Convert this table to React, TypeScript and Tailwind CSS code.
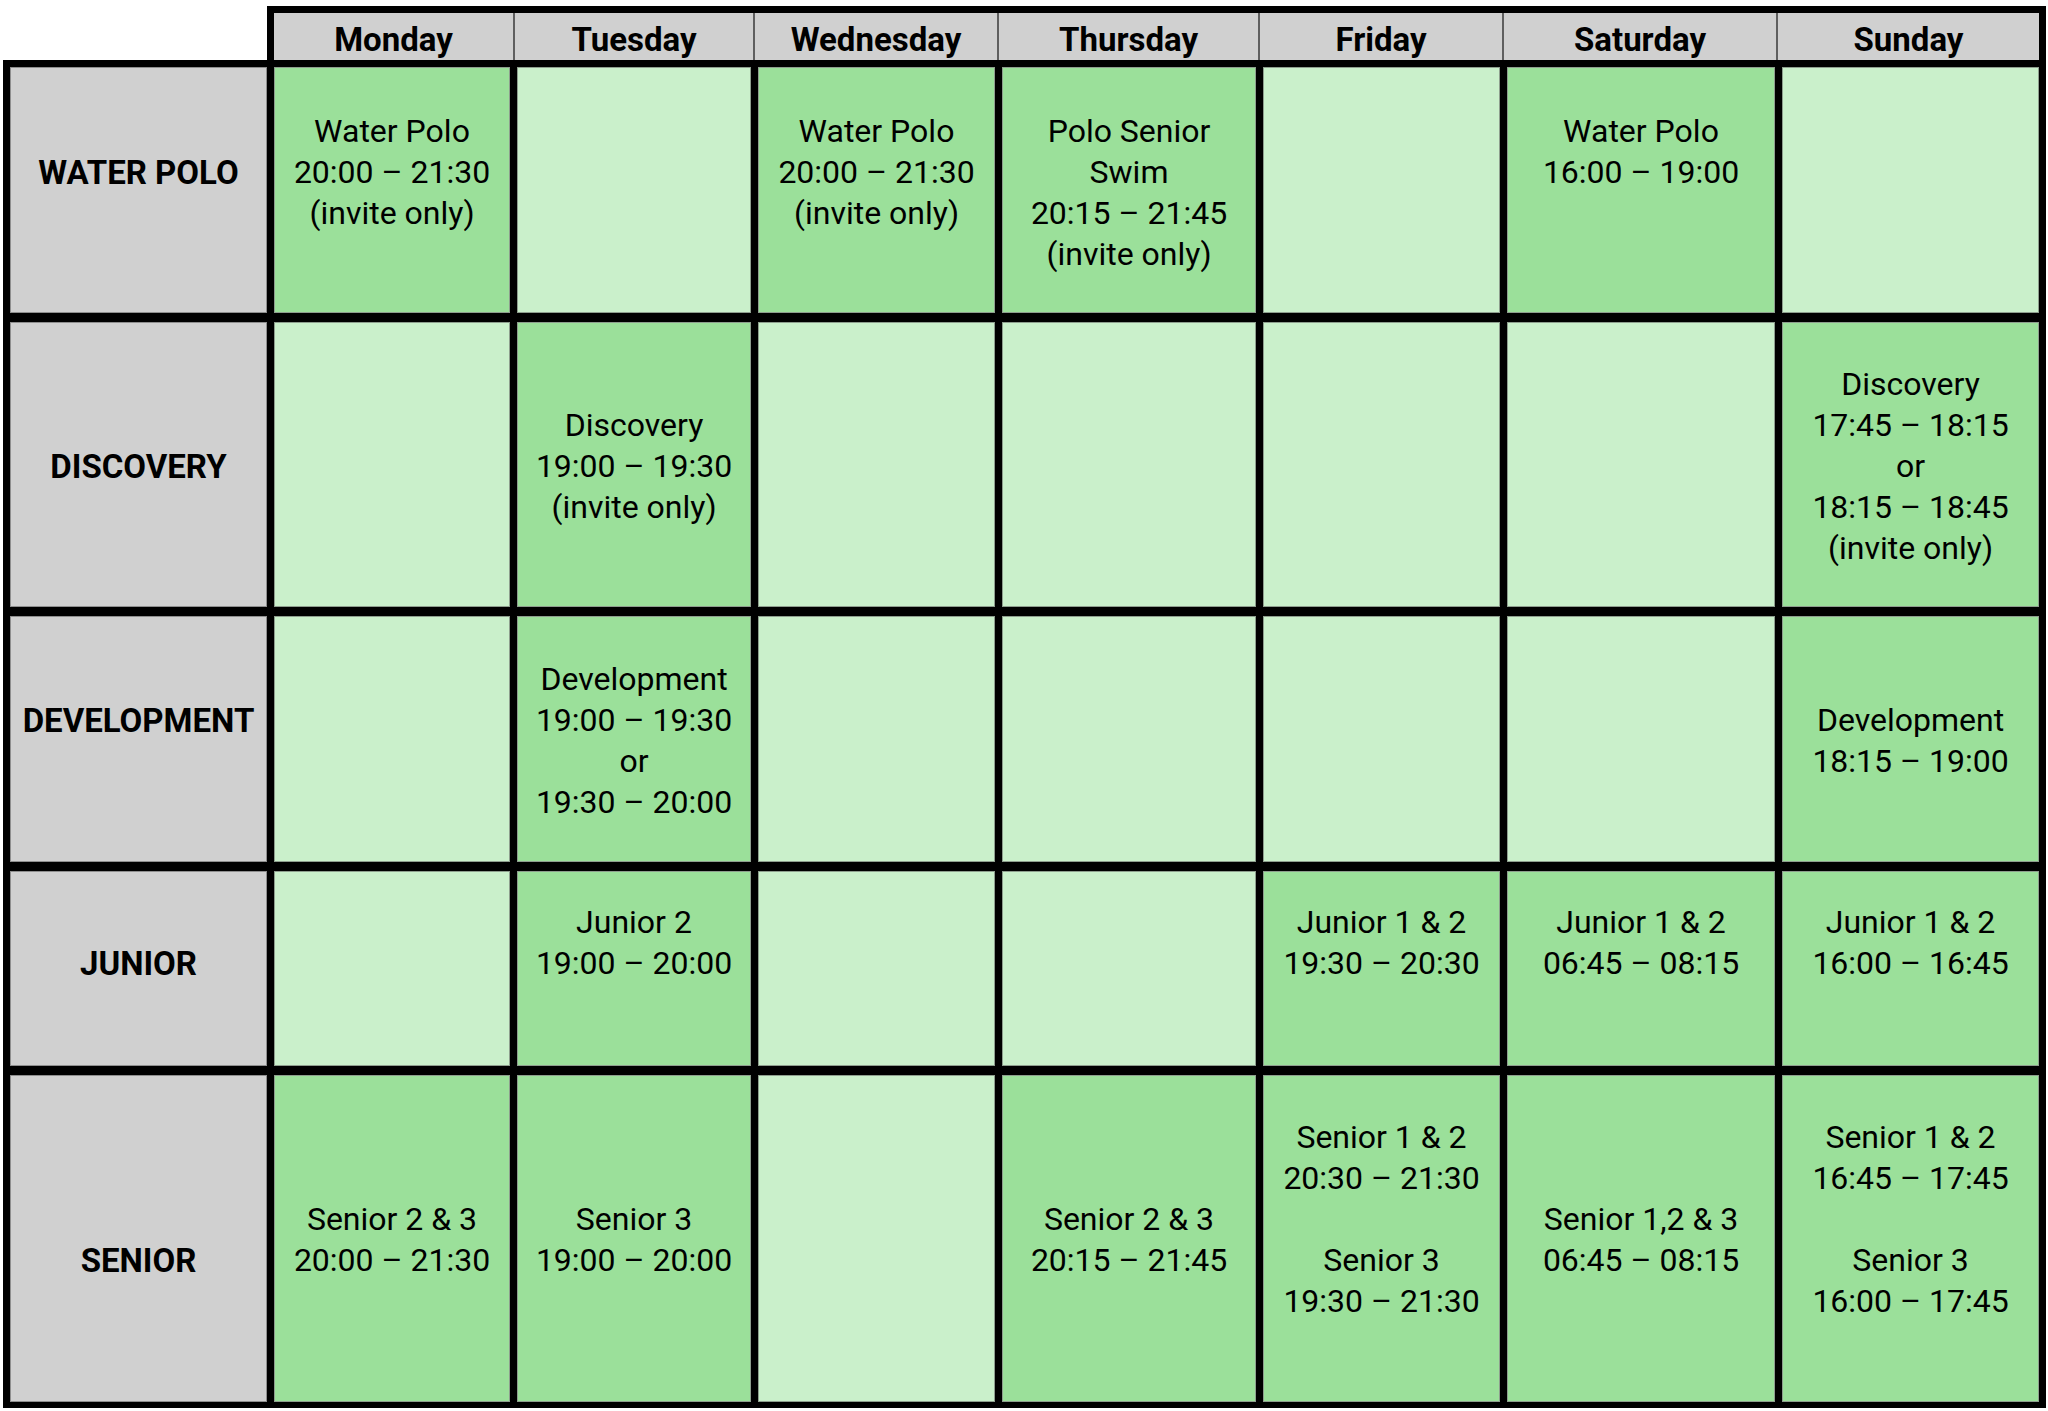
import React from "react";

type Cell = { dark: boolean; lines: string[] };
type Row = { label: string[]; cells: Cell[]; pad: string };

const L: Cell = { dark: false, lines: [] };
const D = (...lines: string[]): Cell => ({ dark: true, lines });

const days: { name: string; w: string }[] = [
  { name: "Monday", w: "w-[239px]" },
  { name: "Tuesday", w: "w-[238px]" },
  { name: "Wednesday", w: "w-[242px]" },
  { name: "Thursday", w: "w-[259px]" },
  { name: "Friday", w: "w-[242px]" },
  { name: "Saturday", w: "w-[272px]" },
  { name: "Sunday", w: "w-[261px]" },
];

const rows: Row[] = [
  {
    label: ["WATER POLO", ""],
    pad: "pt-[5px]",
    cells: [
      D("Water Polo", "20:00 – 21:30", "(invite only)", ""),
      L,
      D("Water Polo", "20:00 – 21:30", "(invite only)", ""),
      D("Polo Senior", "Swim", "20:15 – 21:45", "(invite only)"),
      L,
      D("Water Polo", "16:00 – 19:00", "", ""),
      L,
    ],
  },
  {
    label: ["DISCOVERY"],
    pad: "pt-[4px]",
    cells: [
      L,
      D("Discovery", "19:00 – 19:30", "(invite only)"),
      L,
      L,
      L,
      L,
      D("Discovery", "17:45 – 18:15", "or", "18:15 – 18:45", "(invite only)"),
    ],
  },
  {
    label: ["DEVELOPMENT", ""],
    pad: "pt-[4px]",
    cells: [
      L,
      D("Development", "19:00 – 19:30", "or", "19:30 – 20:00"),
      L,
      L,
      L,
      L,
      D("Development", "18:15 – 19:00"),
    ],
  },
  {
    label: ["JUNIOR"],
    pad: "pb-[10px]",
    cells: [
      L,
      D("Junior 2", "19:00 – 20:00", ""),
      L,
      L,
      D("Junior 1 & 2", "19:30 – 20:30", ""),
      D("Junior 1 & 2", "06:45 – 08:15", ""),
      D("Junior 1 & 2", "16:00 – 16:45", ""),
    ],
  },
  {
    label: ["", "SENIOR"],
    pad: "pt-[3px]",
    cells: [
      D("Senior 2 & 3", "20:00 – 21:30"),
      D("Senior 3", "19:00 – 20:00"),
      L,
      D("Senior 2 & 3", "20:15 – 21:45"),
      D("Senior 1 & 2", "20:30 – 21:30", "", "Senior 3", "19:30 – 21:30", ""),
      D("Senior 1,2 & 3", "06:45 – 08:15"),
      D("Senior 1 & 2", "16:45 – 17:45", "", "Senior 3", "16:00 – 17:45", ""),
    ],
  },
];

function Lines({ lines, bold }: { lines: string[]; bold?: boolean }) {
  return (
    <>
      {lines.map((t, i) => (
        <div
          key={i}
          className={
            bold
              ? "h-[41px] leading-[41px] text-[33px] font-bold whitespace-nowrap"
              : "h-[41px] leading-[41px] text-[32px] whitespace-nowrap"
          }
        >
          {t}
        </div>
      ))}
    </>
  );
}

export default function App() {
  return (
    <div className="w-[2048px] h-[1411px] bg-white text-black font-[Roboto,sans-serif] flex flex-col pt-[6px]">
      {/* Header */}
      <div className="ml-[267px] w-[1779px] border-t-[7px] border-l-[7px] border-r-[7px] border-black bg-[#d0d0d0] flex h-[54px]">
        {days.map((d, i) => (
          <React.Fragment key={d.name}>
            {i > 0 && <div className="w-[2px] bg-[#5f5f5f]" />}
            <div className={`${d.w} flex items-center justify-center pt-[6px] text-[33px] font-bold`}>
              {d.name}
            </div>
          </React.Fragment>
        ))}
      </div>

      {/* Table */}
      <div className="ml-[3px] w-[2043px] bg-black pt-[7px] pl-[7px] pr-[7px] pb-[6px] grid grid-cols-[257px_236px_234px_237px_254px_237px_268px_257px] grid-rows-[246px_285px_246px_195px_327px] gap-x-[7px] gap-y-[9px]">
        {rows.map((r, ri) => (
          <React.Fragment key={ri}>
            <div className={`bg-[#d0d0d0] border border-[#8e8e8e] flex flex-col items-center justify-center text-center ${r.pad}`}>
              <Lines lines={r.label} bold />
            </div>
            {r.cells.map((c, ci) => (
              <div
                key={ci}
                className={
                  (c.dark ? "bg-[#9be09a]" : "bg-[#caf0cb]") +
                  ` border border-[#8e9e8e] flex flex-col items-center justify-center text-center ${r.pad}`
                }
              >
                <Lines lines={c.lines} />
              </div>
            ))}
          </React.Fragment>
        ))}
      </div>
    </div>
  );
}
